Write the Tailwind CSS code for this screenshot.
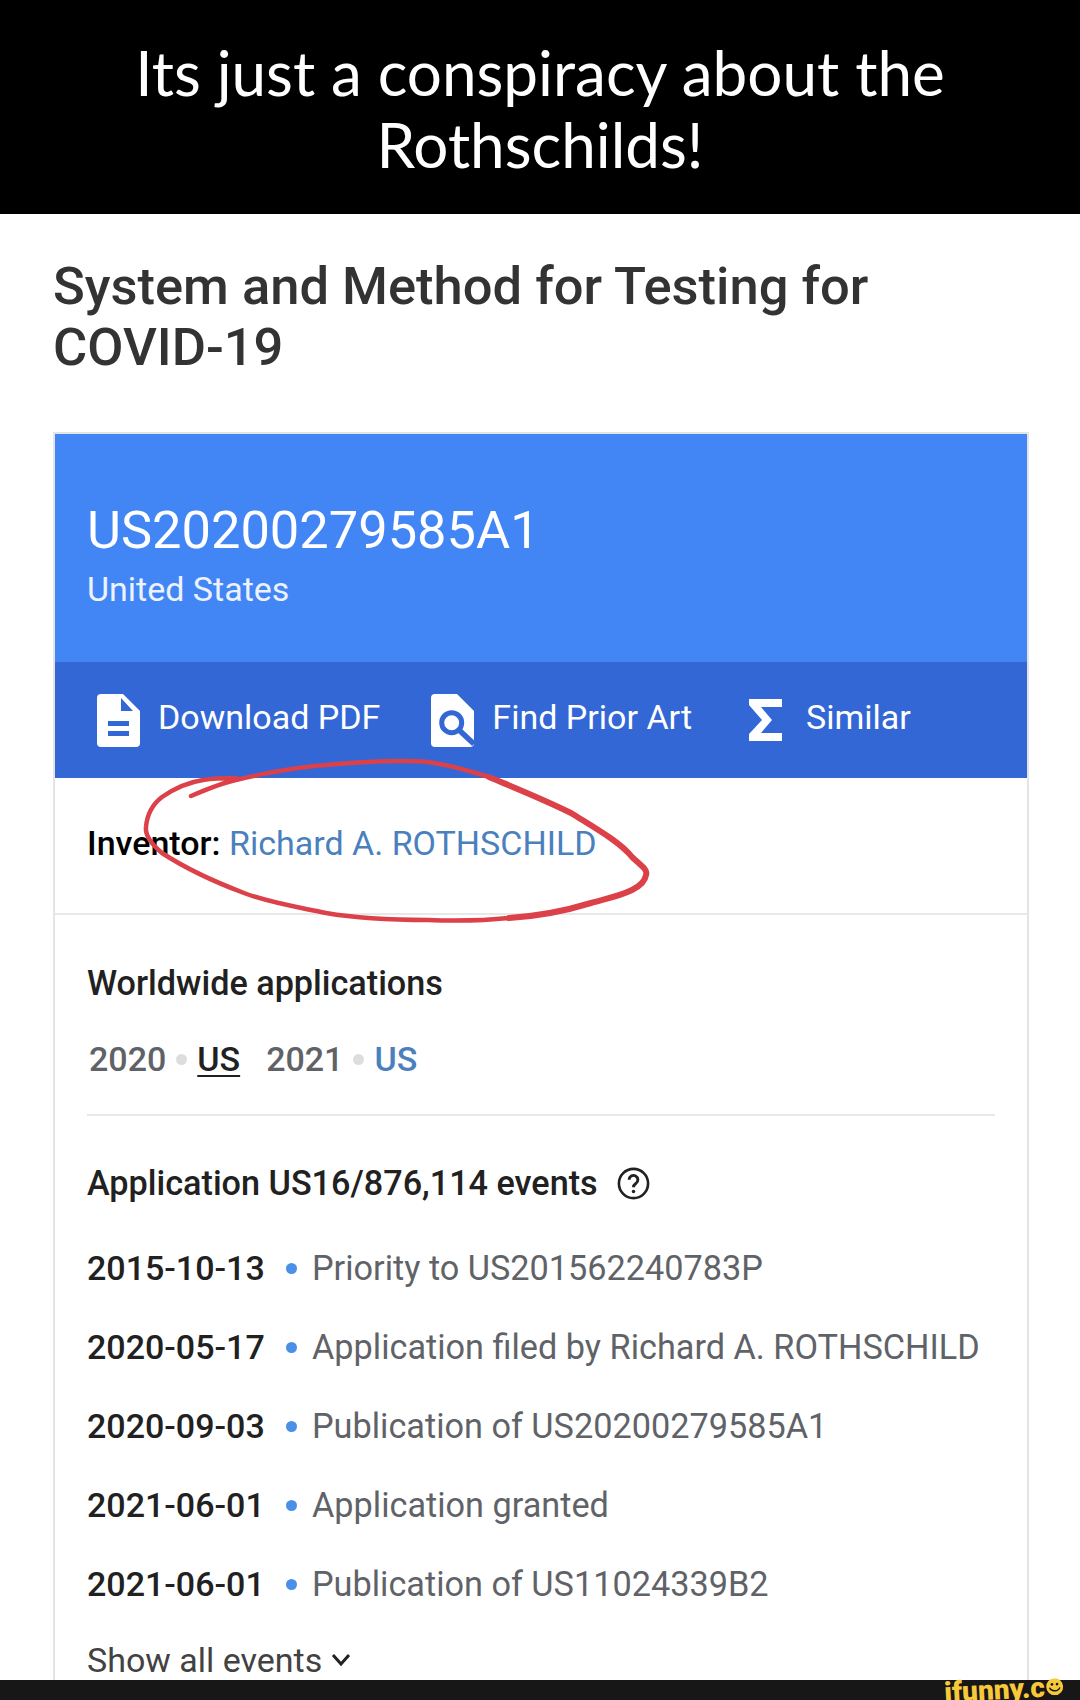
<!DOCTYPE html>
<html><head><meta charset="utf-8"><script src="https://cdn.jsdelivr.net/npm/@tailwindcss/browser@4"></script></head>
<body class="bg-white">
<div class="relative w-[1080px] h-[1700px] overflow-hidden bg-white font-['Roboto',sans-serif]">
  <div class="h-[214px] bg-black text-white text-center text-[62px] leading-[72px] pt-[36px] font-['Lato',sans-serif]">
    <div>Its just a conspiracy about the</div><div>Rothschilds!</div>
  </div>
  <h1 class="pl-[53px] pt-[42px] text-[#333333] text-[52.5px] leading-[61px] font-medium w-[1000px]">System and Method for Testing for<br>COVID-19</h1>
  <div class="ml-[53px] w-[976px] mt-[54px] h-[1300px] border-x-2 border-t-2 border-[#e4e4e4]">
    <div class="h-[228px] bg-[#4285f4] text-white pl-[32px] pt-[66px]">
      <div class="text-[52.4px] leading-[60px] font-normal">US20200279585A1</div>
      <div class="text-[34px] leading-[40px] mt-[9px] text-white/90">United States</div>
    </div>
    <div class="h-[116px] bg-[#3367d6] text-white flex items-center pl-[42px] text-[34px]">
      <svg class="w-[43px] h-[53px] shrink-0" viewBox="0 0 43 53"><path fill="#fff" d="M4 0H26L43 17V49a4 4 0 0 1-4 4H4a4 4 0 0 1-4-4V4a4 4 0 0 1 4-4Z"/><path fill="#3367d6" d="M24 4V17H36Z"/><rect x="11" y="27" width="21" height="5" fill="#3367d6"/><rect x="11" y="37" width="21" height="5" fill="#3367d6"/></svg>
      <span class="ml-[18px] -mt-[6px]">Download PDF</span>
      <svg class="ml-[51px] w-[43px] h-[53px] shrink-0" viewBox="0 0 43 53"><path fill="#fff" d="M4 0H26L43 17V49a4 4 0 0 1-4 4H4a4 4 0 0 1-4-4V4a4 4 0 0 1 4-4Z"/><circle cx="20.7" cy="28.7" r="10" fill="none" stroke="#3367d6" stroke-width="5"/><path d="M28 36 43 50" stroke="#3367d6" stroke-width="5.5"/></svg>
      <span class="ml-[18px] -mt-[6px]">Find Prior Art</span>
      <svg class="ml-[57px] w-[33px] h-[42px] shrink-0" viewBox="0 0 33 42"><path fill="#fff" d="M0 0H33V8H12L23 21 12 34H33V42H0V35L13 21 0 6Z"/></svg>
      <span class="ml-[24px] -mt-[6px]">Similar</span>
    </div>
    <div class="h-[137px] border-b-2 border-[#e8e8e8] pl-[32px] pt-[45px] text-[34px] leading-[40px]">
      <span class="font-medium text-black">Inventor:</span> <span class="text-[#4a80bd]">Richard A. ROTHSCHILD</span>
    </div>
    <div class="mx-[32px] pt-[48px]">
      <div class="text-[34.2px] leading-[40px] font-medium text-[#212121]">Worldwide applications</div>
      <div class="flex items-center text-[34px] leading-[40px] font-medium mt-[36px] pl-[2px] text-[#5f6368] h-[40px]">
        <span>2020</span><span class="mx-[10px] w-[11px] h-[11px] rounded-full bg-[#dddddd]"></span><span class="text-[#212121] underline decoration-2 underline-offset-4">US</span>
        <span class="ml-[26px]">2021</span><span class="mx-[10px] w-[11px] h-[11px] rounded-full bg-[#dddddd]"></span><span class="text-[#4a80bd]">US</span>
      </div>
      <div class="mt-[35px] border-t-2 border-[#e8e8e8]"></div>
      <div class="flex items-center mt-[47px] text-[34.2px] leading-[40px] font-medium text-[#212121]">Application US16/876,114 events
        <svg class="ml-[18px] w-[35px] h-[35px]" viewBox="0 0 24 24" fill="none" stroke="#212121" stroke-width="1.8"><circle cx="12" cy="12" r="10"/><path stroke-width="2" d="M9 9.5a3 3 0 1 1 4.6 2.5c-1 .7-1.6 1.2-1.6 2.6"/><circle cx="12" cy="17.5" r="1.2" fill="#212121" stroke="none"/></svg>
      </div>
      <div class="mt-[45px] flex flex-col gap-[39px] text-[34.25px] leading-[40px]">
        <div class="flex items-center"><span class="w-[176px] text-[34px] font-medium text-[#212121] whitespace-nowrap">2015-10-13</span><span class="ml-[23px] mr-[15px] w-[11px] h-[11px] rounded-full bg-[#4a8fe8]"></span><span class="text-[#5f6368]">Priority to US201562240783P</span></div>
        <div class="flex items-center"><span class="w-[176px] text-[34px] font-medium text-[#212121] whitespace-nowrap">2020-05-17</span><span class="ml-[23px] mr-[15px] w-[11px] h-[11px] rounded-full bg-[#4a8fe8]"></span><span class="text-[#5f6368]">Application filed by Richard A. ROTHSCHILD</span></div>
        <div class="flex items-center"><span class="w-[176px] text-[34px] font-medium text-[#212121] whitespace-nowrap">2020-09-03</span><span class="ml-[23px] mr-[15px] w-[11px] h-[11px] rounded-full bg-[#4a8fe8]"></span><span class="text-[#5f6368]">Publication of US20200279585A1</span></div>
        <div class="flex items-center"><span class="w-[176px] text-[34px] font-medium text-[#212121] whitespace-nowrap">2021-06-01</span><span class="ml-[23px] mr-[15px] w-[11px] h-[11px] rounded-full bg-[#4a8fe8]"></span><span class="text-[#5f6368]">Application granted</span></div>
        <div class="flex items-center"><span class="w-[176px] text-[34px] font-medium text-[#212121] whitespace-nowrap">2021-06-01</span><span class="ml-[23px] mr-[15px] w-[11px] h-[11px] rounded-full bg-[#4a8fe8]"></span><span class="text-[#5f6368]">Publication of US11024339B2</span></div>
      </div>
      <div class="flex items-center mt-[36px] text-[34px] leading-[40px] text-[#424242]">Show all events
        <svg class="ml-[9px] w-[20px] h-[14px]" viewBox="0 0 20 14" fill="none" stroke="#212121" stroke-width="3"><path d="M2 2 10 11 18 2"/></svg>
      </div>
    </div>
  </div>
  <svg class="absolute left-0 top-0 pointer-events-none" width="1080" height="1000" viewBox="0 0 1080 1000" fill="none"><path d="M191 796C205 790 222 783 236 780C270 772 295 767 326 765C360 762 405 760 428 762C450 765 470 771 489 777C520 790 545 800 571 813C595 828 620 842 632 857C642 866 648 870 646 875C645 882 640 886 632 890C620 896 605 899 591 903C565 911 540 916 509 918C480 921 455 921 428 920C390 920 355 918 326 913C298 907 270 903 244 893C215 882 185 868 162 853C150 843 145 835 146 827C147 815 153 804 162 797C175 788 190 782 203 780C215 778 225 778 236 778" stroke="#dc4149" stroke-width="4.500" stroke-linecap="round"/><path d="M489 777C520 790 545 800 571 813C595 828 620 842 632 857C642 866 648 870 646 875C645 882 640 886 632 890C620 896 605 899 591 903C565 911 540 916 509 918" stroke="#dc4149" stroke-width="6" stroke-linecap="round"/></svg>
  <div class="absolute left-0 right-0 bottom-0 h-[20px] bg-[#171717]"></div>
  <div class="absolute left-[945px] bottom-0 h-[24px] w-[135px] overflow-hidden">
    <div class="mt-[4px] flex items-start -rotate-3 origin-bottom-left text-[#f7c83a] font-black text-[28px] leading-[26px] whitespace-nowrap">ifunny.c<svg class="mt-[4px] ml-[1px] w-[17px] h-[17px] shrink-0" viewBox="0 0 20 20"><circle cx="10" cy="10" r="10" fill="#f7c83a"/><circle cx="7" cy="7" r="1.6" fill="#171717"/><circle cx="13" cy="7" r="1.6" fill="#171717"/><path d="M4 11c1.500 5 10.500 5 12 0" fill="none" stroke="#171717" stroke-width="1.6"/></svg></div>
  </div>
</div>
</body></html>
